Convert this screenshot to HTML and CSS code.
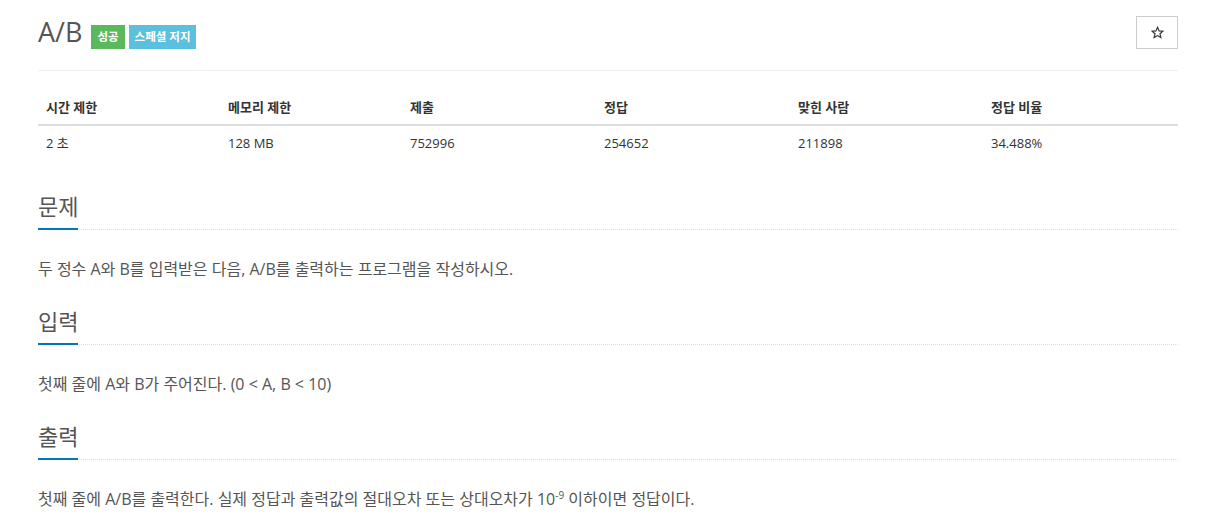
FILE: index.html
```html
<!DOCTYPE html>
<html lang="ko">
<head>
<meta charset="utf-8">
<title>A/B</title>
<link rel="stylesheet" href="styles.css">
</head>
<body>
<div class="container">
  <div class="page-header">
    <h1 class="title"><span class="title-text">A/B</span><span class="label label-success">성공</span><span class="label label-info">스페셜 저지</span></h1>
    <button class="star-btn" type="button" aria-label="즐겨찾기">
      <svg width="13" height="13" viewBox="0 0 24 24"><path d="M12 2.5l2.9 6.6 7.1.6-5.4 4.7 1.6 7-6.2-3.7-6.2 3.7 1.6-7L2 9.7l7.1-.6z" fill="none" stroke="#333" stroke-width="2.2" stroke-linejoin="miter"/></svg>
    </button>
  </div>

  <table class="info-table">
    <colgroup>
      <col class="c1"><col class="c2"><col class="c3"><col class="c4"><col class="c5"><col class="c6">
    </colgroup>
    <thead>
      <tr><th>시간 제한</th><th>메모리 제한</th><th>제출</th><th>정답</th><th>맞힌 사람</th><th>정답 비율</th></tr>
    </thead>
    <tbody>
      <tr><td>2 초</td><td>128 MB</td><td>752996</td><td>254652</td><td>211898</td><td>34.488%</td></tr>
    </tbody>
  </table>

  <section class="problem-section first">
    <div class="headline"><h2>문제</h2></div>
    <p class="problem-text">두 정수 A와 B를 입력받은 다음, A/B를 출력하는 프로그램을 작성하시오.</p>
  </section>

  <section class="problem-section">
    <div class="headline"><h2>입력</h2></div>
    <p class="problem-text">첫째 줄에 A와 B가 주어진다. (0 &lt; A, B &lt; 10)</p>
  </section>

  <section class="problem-section">
    <div class="headline"><h2>출력</h2></div>
    <p class="problem-text">첫째 줄에 A/B를 출력한다. 실제 정답과 출력값의 절대오차 또는 상대오차가 10<sup>-9</sup> 이하이면 정답이다.</p>
  </section>
</div>
</body>
</html>
```

FILE: styles.css
```css
html, body {
  margin: 0;
  padding: 0;
  background: #fff;
}

body {
  font-family: "Open Sans", "Noto Sans CJK KR", sans-serif;
  color: #555;
}

.container {
  width: 1140px;
  margin-left: 38px;
}

.page-header {
  display: flex;
  justify-content: space-between;
  align-items: flex-start;
  padding-top: 13px;
  padding-bottom: 19px;
  border-bottom: 1px solid #eee;
}

.title {
  margin: 0;
  font-size: 27px;
  line-height: 38px;
  font-weight: 400;
  color: #555;
}

.title-text {
  margin-right: 9px;
}

.label {
  display: inline-block;
  height: 24px;
  line-height: 24px;
  padding: 0 6px;
  font-size: 11.5px;
  font-weight: 700;
  color: #fff;
  vertical-align: 1px;
  box-sizing: border-box;
}

.label + .label {
  margin-left: 4px;
}

.label-success {
  background: #5cb85c;
}

.label-info {
  background: #5bc0de;
}

.star-btn {
  margin-top: 3px;
  width: 42px;
  height: 33px;
  display: flex;
  align-items: center;
  justify-content: center;
  background: #fff;
  border: 1px solid #ccc;
  padding: 0;
}

.info-table {
  width: 1140px;
  margin-top: 18px;
  border-collapse: collapse;
  table-layout: fixed;
  font-size: 13px;
  color: #333;
}

.c1 { width: 182px; }
.c2 { width: 182px; }
.c3 { width: 194px; }
.c4 { width: 194px; }
.c5 { width: 193px; }
.c6 { width: 195px; }

.info-table th,
.info-table td {
  text-align: left;
  line-height: 18px;
}

.info-table th {
  padding: 9px 8px 8px;
  font-weight: 700;
  border-bottom: 2px solid #ddd;
}

.info-table td {
  padding: 8px;
}

.problem-section {
  margin-top: 26px;
}

.problem-section.first {
  margin-top: 32px;
}

.headline {
  display: flex;
  border-bottom: 1px dotted #ddd;
}

.headline h2 {
  margin: 0 0 -1px;
  font-size: 22px;
  line-height: 28px;
  font-weight: 400;
  color: #555;
  padding-bottom: 8px;
  border-bottom: 2px solid #0076c0;
}

.problem-text {
  margin: 27px 0 0;
  font-size: 16px;
  line-height: 24px;
  color: #555;
}

.problem-text sup {
  font-size: 10px;
  line-height: 0;
}
```
